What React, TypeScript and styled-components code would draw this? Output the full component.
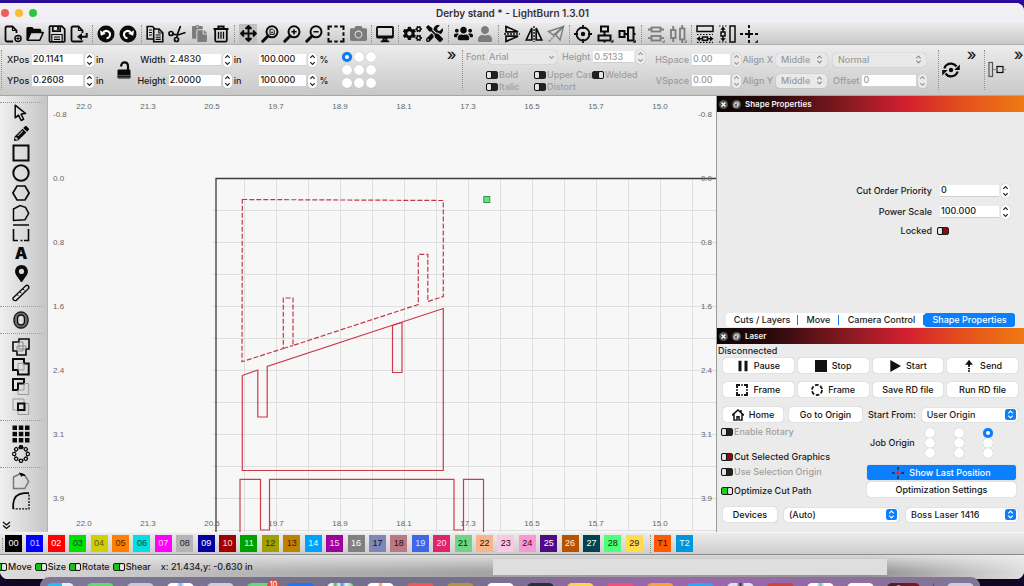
import React from "react";
import styled, { createGlobalStyle, css } from "styled-components";
import {
  FaArrowsAlt,
  FaCamera,
  FaCogs,
  FaMapMarkerAlt,
  FaPaste,
  FaPencilAlt,
  FaTools,
  FaUser,
  FaUsers,
} from "react-icons/fa";

const GlobalStyle = createGlobalStyle`
  * { box-sizing: border-box; }
  body {
    margin: 0;
    background: #12082e;
    color: #1a1a1a;
    font: 500 9px/12px Inter, "Liberation Sans", sans-serif;
    overflow: hidden;
  }
  button, input, select { font: inherit; color: inherit; margin: 0; padding: 0; border: 0; }
  svg { display: block; flex: none; }
`;

/* ---------- window shell ---------- */

const Desktop = styled.div`
  display: flex;
  flex-direction: column;
  height: 100vh;
  padding-top: 3px;
  background: linear-gradient(#2b0a9b 0 20px, #100726 40px, #100726);
`;

const Window = styled.div`
  flex: 1;
  min-height: 0;
  display: flex;
  flex-direction: column;
  border-radius: 0 8px 8px 8px;
  overflow: hidden;
  background: #ebebeb;
`;

const TitleBar = styled.header`
  flex: none;
  display: grid;
  grid-template-columns: 1fr auto 1fr;
  align-items: center;
  height: 20px;
  padding-left: 1px;
  background: #f2eff4;
`;

const Title = styled.h1`
  margin: 0;
  font-size: 10px;
  font-weight: 600;
  color: #333;
`;

const Lights = styled.div`
  display: flex;
  gap: 6px;
`;

const Light = styled.button<{ $color: string }>`
  width: 8px;
  height: 8px;
  border-radius: 50%;
  background: ${(p) => p.$color};
`;

/* ---------- toolbars ---------- */

const ToolBar = styled.div`
  flex: none;
  display: flex;
  align-items: center;
  height: 22px;
  padding-left: 2px;
  background: linear-gradient(#ebebeb, #c9c9c9);
  border-bottom: 1px solid #b0b0b0;
`;

const OptionsBar = styled(ToolBar)`
  height: 51px;
  padding-left: 0;
  background: linear-gradient(#ededed, #c8c8c8);
  border-bottom-color: #a6a6a6;
`;

const ToolButton = styled.button<{ $active?: boolean; $dim?: boolean }>`
  flex: none;
  display: grid;
  place-items: center;
  width: 22px;
  height: 20px;
  border-radius: 2px;
  background: ${(p) => (p.$active ? "#c0c0c0" : "transparent")};
  background-clip: content-box;
  color: ${(p) => (p.$dim ? "#7c7c7c" : "#0a0a0a")};
  padding: 0 2px;
`;

const Divider = styled.span<{ $wide?: boolean }>`
  flex: none;
  width: 1px;
  height: 18px;
  margin: 0 ${(p) => (p.$wide ? 3 : 2)}px;
  border-left: 1px dotted #8d8d8d;
`;

const Grip = styled.span`
  flex: none;
  width: 2px;
  height: 40px;
  border-left: 1px dotted #8d8d8d;
`;

const SideBar = styled.nav`
  flex: none;
  display: flex;
  flex-direction: column;
  width: 48px;
  padding: 6px 5px 0 0;
  background: linear-gradient(90deg, #efefef, #c6c6c6);
  border-right: 1px solid #b4b4b4;
`;

const SideButton = styled.button<{ $dim?: boolean }>`
  flex: none;
  display: grid;
  place-items: center;
  height: 20px;
  background: none;
  color: ${(p) => (p.$dim ? "#777" : "#0a0a0a")};
`;

const SideDivider = styled.span`
  flex: none;
  height: 1px;
  margin: 3px 0;
  border-top: 1px dotted #9a9a9a;
`;

const SideGrip = styled(SideDivider)`
  margin: 0;
`;

const SideMore = styled(SideButton)`
  margin-top: auto;
  width: 12px;
  height: 14px;
`;

const MoreButton = styled.button`
  flex: none;
  align-self: flex-start;
  width: 11px;
  margin-top: 3px;
  font-size: 16px;
  line-height: 12px;
  background: none;
  color: #222;
`;

/* ---------- form controls ---------- */

const Field = styled.label<{ $dim?: boolean }>`
  display: flex;
  align-items: center;
  height: 15px;
  color: ${(p) => (p.$dim ? "#9b9b9b" : "#1a1a1a")};
  white-space: nowrap;
`;

const Caption = styled.span<{ $w?: number; $gap?: number }>`
  flex: none;
  width: ${(p) => (p.$w ? `${p.$w}px` : "auto")};
  padding-right: ${(p) => p.$gap ?? 3}px;
  text-align: right;
`;

const TextBox = styled.input<{ $w: number }>`
  flex: none;
  width: ${(p) => p.$w}px;
  height: 12px;
  padding-left: 1px;
  background: #fff;
  border-bottom: 1px solid #cfcfcf;
  margin-right: 2px;
  border-radius: 0;
`;

const Stepper = styled.span<{ $dim?: boolean }>`
  flex: none;
  display: flex;
  flex-direction: column;
  width: 9px;
  height: 14px;
  border-radius: 4px;
  background: ${(p) => (p.$dim ? "#ebebeb" : "#fff")};
  box-shadow: 0 0 1px #999;
  color: ${(p) => (p.$dim ? "#9b9b9b" : "#222")};
`;

const Step = styled.button`
  display: grid;
  place-items: center;
  height: 7px;
  background: none;
`;

const Unit = styled.span`
  padding-left: 2px;
`;

const Stack = styled.div<{ $gap?: number }>`
  flex: none;
  display: flex;
  flex-direction: column;
  gap: ${(p) => p.$gap ?? 6}px;
`;

const Line = styled.div<{ $gap?: number }>`
  display: flex;
  align-items: center;
  gap: ${(p) => p.$gap ?? 0}px;
`;

const SelectWrap = styled.span<{ $w?: number; $dim?: boolean; $tight?: boolean }>`
  display: grid;
  align-items: center;
  flex: ${(p) => (p.$w ? "none" : "1")};
  width: ${(p) => (p.$w ? `${p.$w}px` : "auto")};
  height: 14px;
  border-radius: 4px;
  background: ${(p) => (p.$dim ? "#e9e9e9" : "#fff")};
  box-shadow: 0 0 1px #999;
  color: ${(p) => (p.$dim ? "#9b9b9b" : "#222")};

  select {
    grid-area: 1 / 1;
    width: 100%;
    height: 14px;
    padding-left: ${(p) => (p.$tight ? 1 : 5)}px;
    appearance: none;
    background: none;
    opacity: 1;
  }
  svg {
    grid-area: 1 / 1;
    justify-self: end;
    margin-right: 2px;
    pointer-events: none;
  }
`;

const Switch = styled.input.attrs({ type: "checkbox" })<{ $tone?: string }>`
  flex: none;
  appearance: none;
  display: flex;
  width: 12px;
  height: 8px;
  border-radius: 2px;
  background: ${(p) => p.$tone ?? "#222"};
  border: 1px solid #222;
  &::before {
    content: "";
    box-sizing: content-box;
    width: 4px;
    height: 6px;
    margin: -1px;
    border: 1px solid #111;
    border-radius: 2px;
    background: #e6e6e6;
  }
  &:checked {
    justify-content: flex-end;
  }
`;

const SwitchLabel = styled.label<{ $dim?: boolean; $w?: number }>`
  flex: none;
  display: flex;
  align-items: center;
  gap: 1px;
  height: 12px;
  width: ${(p) => (p.$w ? `${p.$w}px` : "auto")};
  white-space: nowrap;
  color: ${(p) => (p.$dim ? "#9f9f9f" : "#1a1a1a")};
`;

const AnchorGrid = styled.fieldset<{ $col: number; $row: number }>`
  flex: none;
  display: grid;
  grid-template-columns: repeat(3, ${(p) => p.$col}px);
  grid-auto-rows: ${(p) => p.$row}px;
  place-items: center;
  margin: 0;
  padding: 0;
  border: 0;
`;

const Radio = styled.input.attrs({ type: "radio" })`
  appearance: none;
  width: 10px;
  height: 10px;
  border-radius: 50%;
  background: #fff;
  box-shadow: 0 0 1px #aaa;
  &:checked {
    background: #fff;
    border: 3px solid #0a7cff;
  }
`;

/* ---------- main area ---------- */

const Main = styled.main`
  flex: 1;
  min-height: 0;
  display: flex;
`;

const CanvasArea = styled.section`
  flex: 1;
  min-width: 0;
  background: #f7f7f7;
  border-right: 1px solid #9a9a9a;
  overflow: hidden;
  > svg { width: 100%; height: 100%; }
`;

const SidePanel = styled.aside`
  flex: none;
  display: flex;
  flex-direction: column;
  width: 307px;
  background: #ebebeb;
`;

const PanelHeader = styled.header`
  flex: none;
  display: flex;
  align-items: center;
  gap: 4px;
  height: 16px;
  padding-left: 2px;
  color: #f4f4f4;
  font-size: 8px;
  font-weight: 600;
  background: linear-gradient(90deg, #0a0505, #2a0a0c 18%, #861920 42%, #d4202f 62%, #e4501d 80%, #f07a12);
`;

const HeaderButton = styled.button`
  display: grid;
  place-items: center;
  width: 9px;
  height: 9px;
  border-radius: 50%;
  background: #555;
  color: #fff;
`;

const PanelTitle = styled.h2`
  margin: 0;
  font: inherit;
`;

const PropertyList = styled.div`
  flex: 1;
  display: flex;
  flex-direction: column;
  align-items: flex-end;
  gap: 6px;
  padding: 71px 14px 0 0;
`;

const LockRow = styled.label`
  display: flex;
  align-items: center;
  gap: 5px;
  padding-right: 61px;
`;

const TabBar = styled.div`
  flex: none;
  display: flex;
  height: 14px;
  margin: 0 9px 1px;
  border-radius: 3px;
  background: #fff;
`;

const Tab = styled.button<{ $active?: boolean; $grow: number }>`
  flex: ${(p) => p.$grow} 1 0;
  white-space: nowrap;
  background: linear-gradient(#0a80ff, #0a80ff) right center / 1px 10px no-repeat;
  ${(p) =>
    p.$active &&
    css`
      background: #0a80ff;
      color: #fff;
      border-radius: 3px;
    `}
`;

const LaserBody = styled.div`
  flex: none;
  display: flex;
  flex-direction: column;
  padding: 1px 6px 10px;
`;

const StatusText = styled.p`
  margin: 0 0 1px -5px;
`;

const ButtonRow = styled.div<{ $below: number; $gap?: number }>`
  display: flex;
  align-items: center;
  gap: ${(p) => p.$gap ?? 4}px;
  margin-bottom: ${(p) => p.$below}px;
  white-space: nowrap;
`;

const PushButton = styled.button<{ $w?: number; $primary?: boolean }>`
  flex: ${(p) => (p.$w ? "none" : "1 1 0")};
  width: ${(p) => (p.$w ? `${p.$w}px` : "auto")};
  display: flex;
  align-items: center;
  justify-content: center;
  gap: 5px;
  height: 15px;
  border-radius: 3px;
  white-space: nowrap;
  background: ${(p) => (p.$primary ? "#0a80ff" : "#fff")};
  color: ${(p) => (p.$primary ? "#fff" : "#111")};
  box-shadow: 0 0 1px #8a8a8a;
`;

const LaserOptions = styled.div`
  display: grid;
  grid-template-columns: 144px 1fr;
  margin-bottom: 10px;
`;

const OptionColumn = styled.div`
  display: flex;
  flex-direction: column;
  justify-content: space-between;
  margin-left: -2px;
`;

const OptionPair = styled.div`
  display: flex;
  flex-direction: column;
  gap: 3px;
  padding-top: 6px;
`;

const OriginColumn = styled.div`
  display: flex;
  flex-direction: column;
  gap: 2px;
  padding-right: 2px;
  button { flex: none; }
`;

const JobOrigin = styled.div`
  display: flex;
  align-items: center;
  justify-content: space-between;
  padding: 2px 14px 5px 3px;
`;

/* ---------- palette and status bar ---------- */

const Palette = styled.div`
  flex: none;
  display: flex;
  align-items: center;
  height: 23px;
  padding-left: 2px;
  background: linear-gradient(#ececec, #cccccc);
  border-top: 1px solid #f4f4f4;
  border-bottom: 1px solid #8c8c8c;
`;

const Swatches = styled.div<{ $w: number }>`
  flex: none;
  display: flex;
  justify-content: space-between;
  width: ${(p) => p.$w}px;
`;

const Swatch = styled.button<{ $bg: string; $fg: string }>`
  width: 17px;
  height: 17px;
  background: ${(p) => p.$bg};
  color: ${(p) => p.$fg};
  font: 400 9px/17px "Liberation Sans", sans-serif;
  text-align: center;
`;

const PaletteGrip = styled.span`
  width: 3px;
  height: 12px;
  border-left: 1px dotted #888;
`;

const StatusBar = styled.footer`
  flex: none;
  display: grid;
  grid-template-columns: 493px 1fr 137px;
  align-items: center;
  height: 24px;
  background:
    linear-gradient(rgba(240, 240, 240, 0.75), rgba(240, 240, 240, 0) 70%),
    linear-gradient(90deg, #dcdcdc, #b4b4b4 25%, #a2a2a2 50%, #929292 85%, #dedede);
`;

const StatusItems = styled.div`
  display: flex;
  gap: 3px;
  margin-left: -5px;
`;

const Coordinates = styled.output`
  margin-left: 7px;
`;

const ProgressArea = styled.div`
  height: 16px;
  background: #dedede;
`;

const Dock = styled.div`
  flex: none;
  position: relative;
  display: flex;
  align-items: flex-start;
  gap: 13px;
  height: 9px;
  margin: -2px 44px 0 40px;
  padding: 6px 7px 0;
  overflow: hidden;
  border-radius: 9px 9px 0 0;
  background: linear-gradient(90deg, #80789a, #77708c 25%, #77708c 45%, #9a67aa 65%, #9a67aa 75%, #7f7794);
`;

const DockIcon = styled.span<{ $bg: string; $w?: number }>`
  flex: none;
  width: ${(p) => p.$w ?? 27}px;
  height: 27px;
  border-radius: 5px;
  background: ${(p) => p.$bg};
`;

const DockBadge = styled.span`
  position: absolute;
  left: 227px;
  top: 3px;
  width: 13px;
  height: 13px;
  border-radius: 50%;
  background: #e8483f;
  color: #fff;
  font-size: 7px;
  line-height: 9px;
  text-align: center;
`;

/* ---------- glyphs ---------- */

type GlyphProps = { size?: number; w?: number; children: React.ReactNode };

const Glyph = ({ size = 18, w = 1.6, children }: GlyphProps) => (
  <svg width={size} height={size} viewBox="0 0 18 18" fill="none" stroke="currentColor" strokeWidth={w} aria-hidden="true">
    {children}
  </svg>
);

const Magnifier = ({ children }: { children: React.ReactNode }) => (
  <Glyph>
    <circle cx="11" cy="6.8" r="5.5" strokeWidth="2" />
    <path d="M7 11l-5.2 5.2" strokeWidth="3" strokeLinecap="round" />
    {children}
  </Glyph>
);

const Chevron = ({ up }: { up?: boolean }) => (
  <svg width="7" height="5" viewBox="0 0 7 5" fill="none" stroke="currentColor" strokeWidth="1.2" aria-hidden="true">
    <path d={up ? "M1.3 3.8L3.5 1.6l2.2 2.2" : "M1.3 1.2l2.2 2.2 2.2-2.2"} />
  </svg>
);

const UpDown = ({ blue }: { blue?: boolean }) => (
  <svg width="11" height="11" viewBox="0 0 11 11" fill="none" strokeWidth="1.2" aria-hidden="true">
    {blue && <rect width="11" height="11" rx="2.5" fill="#0a80ff" />}
    <path d="M3.3 4.4l2.2-2.2 2.2 2.2M3.3 6.6l2.2 2.2 2.2-2.2" stroke={blue ? "#fff" : "#8d8d8d"} />
  </svg>
);

const icons = {
  newFile: (
    <Glyph w={1.8}>
      <path d="M12.5 8V5.5L8.5 1.5H3q-1.5 0-1.5 1.5v12q0 1.5 1.5 1.5h6" />
      <path d="M8.5 1.5V5.5h4" strokeWidth="1.2" />
      <circle cx="14" cy="13.5" r="3" strokeWidth="1.5" />
      <path d="M14 11.8v3.4M12.3 13.5h3.4" strokeWidth="1.1" />
    </Glyph>
  ),
  open: (
    <Glyph>
      <path d="M1.2 15V3.5q0-.7.7-.7h4l1.6 1.8h6.3q.7 0 .7.7V8" fill="currentColor" />
      <path d="M1.5 15.2L4.8 7.5h12.400l-3.400 7.7z" fill="#dcdcdc" strokeLinejoin="round" />
    </Glyph>
  ),
  save: (
    <Glyph w={1.8}>
      <path d="M1.5 2q0-.8.8-.8h11.500l2.900 2.900V16q0 .8-.8.8H2.300q-.8 0-.8-.8z" />
      <path d="M4.800 1.500v4.700h7.400V1.500M10 2v3" />
      <path d="M3.800 16.500V9.500h10.400v7M6 12h6M6 14.300h6" strokeWidth="1.2" />
    </Glyph>
  ),
  importFile: (
    <Glyph w={1.8}>
      <path d="M12.5 8V5.5L8.5 1.5H3q-1.5 0-1.5 1.5v12q0 1.5 1.5 1.5h8q1.5 0 1.5-1" />
      <path d="M8.5 1.5V5.5h4" strokeWidth="1.2" />
      <path d="M16.700 8v3.700H10" strokeWidth="2" />
      <path d="M7 11.700l5-3.700v7.400z" fill="currentColor" stroke="none" />
    </Glyph>
  ),
  undo: (
    <Glyph>
      <circle cx="9" cy="9" r="8.5" fill="currentColor" stroke="none" />
      <path d="M5.5 8.5q2.2-3.7 5.6-2.2 3.2 1.8 1.2 5.4-1 1.5-2.8 1.6" stroke="#fff" strokeWidth="2" />
      <path d="M3 5.2l.8 5.6 4.900-2z" fill="#fff" stroke="none" />
    </Glyph>
  ),
  redo: (
    <Glyph>
      <circle cx="9" cy="9" r="8.5" fill="currentColor" stroke="none" />
      <path d="M12.5 8.5Q10.3 4.8 6.9 6.3 3.7 8.1 5.7 11.7q1 1.5 2.8 1.6" stroke="#fff" strokeWidth="2" />
      <path d="M15 5.2l-.8 5.6-4.900-2z" fill="#fff" stroke="none" />
    </Glyph>
  ),
  copy: (
    <Glyph w={1.6}>
      <path d="M7 14H1.2V1.5H6.5L9 4" />
      <path d="M3 5h3M3 7.5h3M3 10h3" strokeWidth="1.1" />
      <path d="M7.7 4h5.3l3.8 3.8v9H7.7z" />
      <path d="M12.8 4.2V8h4M9.7 10h5M9.7 12.2h5M9.7 14.4h5" strokeWidth="1.1" />
    </Glyph>
  ),
  cut: (
    <Glyph w={1.7}>
      <circle cx="3" cy="8.5" r="2" />
      <circle cx="8.5" cy="14.5" r="2" />
      <path d="M4.8 9.2L10 10 17.500 7.500M8.800 12.500L9.500 9 12.500 1" />
    </Glyph>
  ),
  trash: (
    <Glyph w={1.8}>
      <path d="M1.5 4h15M6.3 3.8V1.5h5.4v2.3M3.2 4.3v11q0 1.4 1.4 1.4h8.8q1.4 0 1.4-1.4v-11" />
      <path d="M6.5 6.8v7M9 6.8v7M11.5 6.8v7" strokeWidth="1.3" />
    </Glyph>
  ),
  zoomPage: (
    <Magnifier>
      <path d="M9 4.200h2.800l1.400 1.400v3.800H9zM10 7.300h2" strokeWidth="1" />
    </Magnifier>
  ),
  zoomIn: (
    <Magnifier>
      <path d="M11 4.2v5.2M8.4 6.8h5.2" />
    </Magnifier>
  ),
  zoomOut: (
    <Magnifier>
      <path d="M8.4 6.8h5.2" />
    </Magnifier>
  ),
  frame: (
    <Glyph w={2}>
      <path d="M1.5 5V1.5H5M7.3 1.5h3.4M13 1.5h3.5V5M16.5 7.3v3.4M16.5 13v3.5H13M10.7 16.5H7.3M5 16.5H1.5V13M1.5 10.7V7.3" />
    </Glyph>
  ),
  monitor: (
    <Glyph w={1.8}>
      <rect x="1" y="2" width="16" height="10.5" rx=".8" />
      <path d="M1 11.5h16" strokeWidth="2" />
      <path d="M7.5 13.5h3v2.5h-3zM4.8 16.3h8.4" />
    </Glyph>
  ),
  flipV: (
    <Glyph w={1.7}>
      <path d="M3 1.5L15 6.800H3z" />
      <path d="M3 16.500L15 11.200H3z" />
      <path d="M1 9h16" strokeDasharray="2 1" strokeWidth="1.300" />
    </Glyph>
  ),
  flipH: (
    <Glyph w={1.7}>
      <path d="M1.2 15L6.800 3v12z" />
      <path d="M16.800 15L11.200 3v12z" />
      <path d="M9 1v16" strokeDasharray="2 1" strokeWidth="1.300" />
    </Glyph>
  ),
  mirrorLine: (
    <Glyph w={1.4}>
      <path d="M1.5 6.5L16.5 1.5 6.5 10zM16.5 1.5L13 15 8.5 9.5z" />
      <path d="M2 16.500L16 2" strokeDasharray="2 1" />
    </Glyph>
  ),
  target: (
    <Glyph w={1.8}>
      <circle cx="9" cy="9" r="6.5" />
      <circle cx="9" cy="9" r="2.2" fill="currentColor" stroke="none" />
      <path d="M9 0v4M9 14v4M0 9h4M14 9h4" />
    </Glyph>
  ),
  alignCenter: (
    <Glyph w={2}>
      <rect x="5" y="1.5" width="7" height="5" />
      <rect x="2.5" y="10.5" width="12" height="5" />
      <path d="M8.5 6v5M8.5 15v2.5" />
      <path d="M17.5 14.5v3h-3z" fill="currentColor" stroke="none" />
    </Glyph>
  ),
  alignMiddle: (
    <Glyph w={2}>
      <rect x="1.5" y="6" width="5" height="6" />
      <rect x="10" y="2.5" width="5.5" height="13" />
      <path d="M6 9h4.5M15 9h2.5" />
      <path d="M17.8 14.8v3h-3z" fill="currentColor" stroke="none" />
    </Glyph>
  ),
  distributeV: (
    <Glyph w={1.8}>
      <rect x="4.500" y="2.500" width="9" height="4" />
      <rect x="4.500" y="11" width="9" height="4.500" />
      <path d="M1 4.500h3.500M13.500 4.500H17M1 13.200h3.500M13.500 13.200H17" />
      <path d="M17.8 14.8v3h-3z" fill="currentColor" stroke="none" />
    </Glyph>
  ),
  distributeH: (
    <Glyph w={1.8}>
      <rect x="2" y="5" width="4.500" height="8" />
      <rect x="11" y="3.500" width="4.500" height="11" />
      <path d="M4.200 1v4M4.200 13v4M13.200 0v3.500M13.200 14.500V18" />
      <path d="M17.8 14.8v3h-3z" fill="currentColor" stroke="none" />
    </Glyph>
  ),
  sameWidth: (
    <Glyph w={1.5}>
      <rect x="1" y="1" width="16" height="5.500" />
      <path d="M1 9.500h16M1 17.300h16" strokeDasharray="1.500 1.500" strokeWidth="1.200" />
      <rect x="6.500" y="12" width="5" height="3.300" />
      <path d="M.5 13.700l3.500-2.700v5.400zM17.500 13.700l-3.500-2.700v5.400z" fill="currentColor" stroke="none" />
      <path d="M3 13.700h3.500M11.500 13.700H15" />
    </Glyph>
  ),
  sameHeight: (
    <Glyph w={1.5}>
      <rect x="12" y="1" width="5" height="16" />
      <path d="M1 1h8M1 17h8" strokeDasharray="1.500 1.500" strokeWidth="1.200" />
      <rect x="3" y="7" width="4" height="4" />
      <path d="M5 1.500l2.700 3.300H2.300zM5 16.500l2.700-3.300H2.300z" fill="currentColor" stroke="none" />
      <path d="M5 4v3M5 11v3" />
    </Glyph>
  ),
  crossDashed: (
    <Glyph w={1.9}>
      <path d="M9 0v3M9 5v8M9 15v3M0 9h3M5 9h8M15 9h3" />
      <path d="M17.8 14.8v3h-3z" fill="currentColor" stroke="none" />
    </Glyph>
  ),
  arrow: (
    <Glyph w={1.5}>
      <path d="M3.2 1.2v12.6l3.3-2.700 2.600 5.400 2.500-1.200-2.500-5.200 4.600-.5z" strokeLinejoin="round" />
    </Glyph>
  ),
  rect: (
    <Glyph w={2}>
      <rect x="1.5" y="1.5" width="15" height="15" />
    </Glyph>
  ),
  circle: (
    <Glyph w={2}>
      <circle cx="9" cy="9" r="7.7" />
    </Glyph>
  ),
  hexagon: (
    <Glyph w={1.7}>
      <path d="M.9 9L5 2h8l4.1 7L13 16H5z" />
    </Glyph>
  ),
  polygon: (
    <Glyph w={1.5}>
      <path d="M1.5 16.5V5L8 1.5l5.5 1.800 3.200 6-3.700 6.400z" />
    </Glyph>
  ),
  openShape: (
    <Glyph w={1.6}>
      <path d="M1 1h16M6 16.5H1.5V5M12 16.5h4.5V5M8.500 16.500h2" />
    </Glyph>
  ),
  ruler: (
    <Glyph w={1.4}>
      <path d="M1.200 13.800L14 1.500q1.300-.7 2.300.5t.3 2.400L4.300 16.300q-1.600.7-2.700-.3t-.4-2.200z" />
      <path d="M5 10.500l1.500 1.600M8 7.800l1.500 1.600M11 5l1.500 1.600" strokeWidth="1" />
    </Glyph>
  ),
  offset: (
    <Glyph>
      <rect x="3" y="1.800" width="12" height="14.500" rx="6" stroke="#666" strokeWidth="3.200" />
      <rect x="2" y="1" width="14" height="16" rx="7" strokeWidth="1" />
      <rect x="5.500" y="4" width="7" height="10" rx="3.500" strokeWidth="1.500" fill="#ddd" />
    </Glyph>
  ),
  weld: (
    <Glyph w={1.6}>
      <path d="M7 4V1h10v10h-3v6H5v-4H1V4z" />
      <path d="M7 4h4v9H5M5 13V8h9v3H7V4" stroke="#888" strokeWidth="1" />
    </Glyph>
  ),
  union: (
    <Glyph w={2}>
      <path d="M1 1h11v4.500h4.700v11H6V12H1z" />
      <path d="M6 12V5.500h6V12z" stroke="#999" strokeWidth="1" />
    </Glyph>
  ),
  subtract: (
    <Glyph w={2}>
      <path d="M1 1h11v4.500H6V12H1z" />
      <path d="M12 5.500h4.700v11H6V12M6 12h6V5.500" stroke="#999" strokeWidth="1" />
    </Glyph>
  ),
  intersect: (
    <Glyph w={2}>
      <path d="M1 1h11v11H1zM6 5.500h10.700v11H6z" stroke="#999" strokeWidth="1" />
      <path d="M6 5.500h6.500V12H6z" />
    </Glyph>
  ),
  gridArray: (
    <Glyph>
      {[0.5, 6.8, 13].map((y) =>
        [0.5, 6.8, 13].map((x) => (
          <rect key={`${x}-${y}`} x={x} y={y} width="4.5" height="4.5" fill="currentColor" stroke="none" />
        )),
      )}
    </Glyph>
  ),
  ringArray: (
    <Glyph w={1.2}>
      {[0, 45, 90, 135, 180, 225, 270, 315].map((a) => (
        <rect key={a} x="7.500" y=".7" width="3" height="3" rx=".8" transform={`rotate(${a} 9 9)`} fill={a === 0 ? "currentColor" : "none"} />
      ))}
      <circle cx="9" cy="9" r="6.800" strokeDasharray="1.800 3.540" strokeDashoffset="-1.770" strokeWidth="1" />
    </Glyph>
  ),
  startPoint: (
    <Glyph w={1.5}>
      <path d="M1.5 16.500V5L8 1.800l5 1.700 3.700 6-4 7z" stroke="#777" />
      <path d="M7 .5l5 1.500L9.500 5z" fill="#000" stroke="none" />
      <path d="M8 1.500l5 2" stroke="#000" />
    </Glyph>
  ),
  radius: (
    <Glyph w={1.8}>
      <path d="M1.200 17V12Q2 2 12 1.200h5" />
      <path d="M17 2.500v14.300H1.500" strokeDasharray="2 1.200" strokeWidth="1.300" />
    </Glyph>
  ),
  chevrons: (
    <Glyph size={9} w={2.6}>
      <path d="M2 2l7 6 7-6M2 9l7 6 7-6" />
    </Glyph>
  ),
  refresh: (
    <Glyph w={2.2}>
      <path d="M2.300 7.500Q4 2.500 9.500 2.700q3.200.2 5 2.800M15.700 10.500Q14 15.500 8.500 15.300q-3.200-.2-5-2.800" />
      <path d="M17.800 3.500v5.500h-5.500zM.2 14.500V9h5.500z" fill="currentColor" stroke="none" />
      <circle cx="9" cy="9" r="2.200" fill="currentColor" stroke="none" />
    </Glyph>
  ),
  dockLeft: (
    <Glyph w={1.2}>
      <rect x="1" y="1.500" width="3.500" height="14" stroke="#555" />
      <rect x="9" y="5.500" width="6" height="6" />
      <path d="M5 8.500h4M15 8.500h3" stroke="#888" />
    </Glyph>
  ),
  lock: (
    <svg width="14" height="18" viewBox="0 0 14 18" fill="none" aria-hidden="true">
      <path d="M4 5.500Q4.500 1.300 7.700 1.300t3.300 3.900V9" stroke="#0a0a0a" strokeWidth="2.200" />
      <rect x=".5" y="8.500" width="13" height="9" rx="1.200" fill="#0a0a0a" />
      <path d="M1 14.500h12M1 16.300h12" stroke="#777" strokeWidth=".7" />
    </svg>
  ),
};

/* ---------- small composites ---------- */

type NumberFieldProps = {
  label?: string;
  name: string;
  labelW?: number;
  labelGap?: number;
  value: string;
  w: number;
  unit?: string;
  dim?: boolean;
};

const NumberField = ({ label, name, labelW, labelGap, value, w, unit, dim }: NumberFieldProps) => (
  <Line>
    <Field $dim={dim}>
      {label && <Caption $w={labelW} $gap={labelGap}>{label}</Caption>}
      <TextBox $w={w} defaultValue={value} disabled={dim} aria-label={name} />
    </Field>
    <Stepper $dim={dim}>
      <Step aria-label={`Increase ${name}`}><Chevron up /></Step>
      <Step aria-label={`Decrease ${name}`}><Chevron /></Step>
    </Stepper>
    {unit && <Unit>{unit}</Unit>}
  </Line>
);

type DropDownProps = { name: string; value: string; w?: number; dim?: boolean; single?: boolean };

const DropDown = ({ name, value, w, dim, single }: DropDownProps) => (
  <SelectWrap $w={w} $dim={dim} $tight={single}>
    <select aria-label={name} disabled={dim} defaultValue={value}>
      <option>{value}</option>
    </select>
    {single ? <Chevron /> : <UpDown blue={!dim} />}
  </SelectWrap>
);

type ToggleProps = { label: string; on?: boolean; dim?: boolean; tone?: string; w?: number };

const Toggle = ({ label, on, dim, tone, w }: ToggleProps) => (
  <SwitchLabel $dim={dim} $w={w}>
    <Switch defaultChecked={on} disabled={dim} $tone={tone} />
    {label}
  </SwitchLabel>
);

const Anchors = ({ name, selected, col, row }: { name: string; selected: number; col: number; row: number }) => (
  <AnchorGrid $col={col} $row={row} aria-label={name}>
    {Array.from({ length: 9 }, (_, i) => (
      <Radio key={i} name={name} defaultChecked={i === selected} aria-label={`${name} ${i + 1}`} />
    ))}
  </AnchorGrid>
);

const PanelTop = ({ title }: { title: string }) => (
  <PanelHeader>
    <HeaderButton aria-label={`Close ${title}`}>
      <Glyph size={7} w={3.5}><path d="M4 4l10 10M14 4L4 14" /></Glyph>
    </HeaderButton>
    <HeaderButton aria-label={`Float ${title}`}>
      <Glyph size={7} w={2}><path d="M6 6V3h9v8h-3M3 7h9v8H3z" /></Glyph>
    </HeaderButton>
    <PanelTitle>{title}</PanelTitle>
  </PanelHeader>
);

type Tool = { name: string; icon: React.ReactNode; active?: boolean; dim?: boolean };

const toolGroups: Tool[][] = [
  [
    { name: "New", icon: icons.newFile },
    { name: "Open", icon: icons.open },
    { name: "Save", icon: icons.save },
    { name: "Import", icon: icons.importFile },
  ],
  [
    { name: "Undo", icon: icons.undo },
    { name: "Redo", icon: icons.redo },
  ],
  [
    { name: "Copy", icon: icons.copy },
    { name: "Cut", icon: icons.cut },
    { name: "Paste", icon: <FaPaste size={17} />, dim: true },
    { name: "Delete", icon: icons.trash },
  ],
  [
    { name: "Pan", icon: <FaArrowsAlt size={17} />, active: true },
    { name: "Zoom to page", icon: icons.zoomPage },
    { name: "Zoom in", icon: icons.zoomIn },
    { name: "Zoom out", icon: icons.zoomOut },
    { name: "Frame selection", icon: icons.frame },
    { name: "Camera", icon: <FaCamera size={17} />, dim: true },
  ],
  [{ name: "Preview", icon: icons.monitor }],
  [
    { name: "Settings", icon: <FaCogs size={19} /> },
    { name: "Device settings", icon: <FaTools size={17} /> },
  ],
  [
    { name: "Group", icon: <FaUsers size={19} /> },
    { name: "Ungroup", icon: <FaUser size={16} />, dim: true },
  ],
  [
    { name: "Flip vertical", icon: icons.flipV },
    { name: "Flip horizontal", icon: icons.flipH },
    { name: "Mirror across line", icon: icons.mirrorLine, dim: true },
  ],
  [
    { name: "Move to position", icon: icons.target },
    { name: "Align centers", icon: icons.alignCenter },
    { name: "Align middle", icon: icons.alignMiddle },
  ],
  [
    { name: "Distribute vertically", icon: icons.distributeV, dim: true },
    { name: "Distribute horizontally", icon: icons.distributeH, dim: true },
  ],
  [
    { name: "Same width", icon: icons.sameWidth },
    { name: "Same height", icon: icons.sameHeight },
    { name: "Move laser", icon: icons.crossDashed },
  ],
];

const wideAfter = [5, 8];

const LetterA = styled.span`
  font: 900 16px/20px Inter, sans-serif;
`;

const sideGroups: Tool[][] = [
  [
    { name: "Select", icon: icons.arrow },
    { name: "Draw lines", icon: <FaPencilAlt size={15} /> },
    { name: "Rectangle", icon: icons.rect },
    { name: "Ellipse", icon: icons.circle },
    { name: "Polygon", icon: icons.hexagon },
    { name: "Edit nodes", icon: icons.polygon },
    { name: "Tabs", icon: icons.openShape },
    { name: "Text", icon: <LetterA>A</LetterA> },
    { name: "Position laser", icon: <FaMapMarkerAlt size={17} /> },
    { name: "Measure", icon: icons.ruler },
  ],
  [{ name: "Offset", icon: icons.offset }],
  [
    { name: "Weld", icon: icons.weld },
    { name: "Union", icon: icons.union },
    { name: "Subtract", icon: icons.subtract },
    { name: "Intersect", icon: icons.intersect },
  ],
  [
    { name: "Grid array", icon: icons.gridArray },
    { name: "Circular array", icon: icons.ringArray },
  ],
  [
    { name: "Start point", icon: icons.startPoint },
    { name: "Radius", icon: icons.radius },
  ],
];

const layerColors: [string, string][] = [
  ["#000000", "#fff"], ["#0000ff", "#cfcfff"], ["#ff0000", "#fff"], ["#00e000", "#143"], ["#d0d000", "#553"],
  ["#ff8000", "#421"], ["#00e0e0", "#144"], ["#ff00ff", "#fde"], ["#b4b4b4", "#222"], ["#0000a0", "#fff"],
  ["#a00000", "#fdd"], ["#00a000", "#dfd"], ["#a0a000", "#331"], ["#c08000", "#321"], ["#00a0ff", "#dff"],
  ["#a000a0", "#fdf"], ["#808080", "#fff"], ["#7d87b9", "#112"], ["#bb7784", "#211"], ["#3d67e6", "#dfe6ff"],
  ["#e0246a", "#fde"], ["#70d484", "#121"], ["#fab488", "#211"], ["#fcc6e4", "#211"], ["#fa96d4", "#312"],
  ["#500a86", "#fff"], ["#b85200", "#fed"], ["#004450", "#fff"], ["#4eff78", "#121"], ["#ffdc4e", "#221"],
];

const xTicks = ["22.0", "21.3", "20.5", "19.7", "18.9", "18.1", "17.3", "16.5", "15.7", "15.0"];
const yTicks = ["-0.8", "0.0", "0.8", "1.6", "2.4", "3.1", "3.9"];

const dockColors: string[] = [
  "linear-gradient(90deg, #2fb8f5 55%, #e6eef5 55%)", "#62d96b", "#c9c8d3", "linear-gradient(90deg, #fff 35%, #7ab6e8 50%, #fff 65%)",
  "#cfcdd6", "#62dc72", "#1f74f2", "linear-gradient(90deg, #e8f4e8 20%, #49b55c 30%, #e9f3ea 45%, #3c8ff0 55%, #e8f4e8 70%, #65cf73)",
  "linear-gradient(90deg, #fff 40%, #f0a050 50%, #fff 60%)", "#f2574b", "#b39440", "#fdfdfd", "#26303a", "#fbd64b",
  "#f4516d", "#f6a534", "#27a9ec", "linear-gradient(90deg, #dfe3ea 35%, #333 50%, #dfe3ea 65%)", "#cf4636",
  "linear-gradient(90deg, #fff 35%, #59cfb0 50%, #fff 65%)", "#fafafa",
];

/* ---------- canvas ---------- */

const GRID = 32;

const Canvas = () => (
  <CanvasArea aria-label="Work area">
    <svg fill="none">
      <g stroke="#dfdfdf">
        {Array.from({ length: 60 }, (_, i) => (
          <line key={i} x1={196.5 + i * GRID} x2={196.5 + i * GRID} y1="82" y2="100%" />
        ))}
        {Array.from({ length: 40 }, (_, i) => (
          <line key={i} x1="164" x2="100%" y1={114.5 + i * GRID} y2={114.5 + i * GRID} />
        ))}
      </g>
      <path d="M168 2000V82.5H4000" stroke="#3c3c3c" strokeWidth="1.3" />
      <g fill="#666" fontFamily="Liberation Sans, sans-serif" fontSize="8">
        {xTicks.map((t, i) => (
          <text key={t} x={36 + i * 64} y="13" textAnchor="middle">{t}</text>
        ))}
        <svg y="100%" overflow="visible">
          {xTicks.map((t, i) => (
            <text key={t} x={36 + i * 64} y="-6" textAnchor="middle">{t}</text>
          ))}
        </svg>
        {yTicks.map((t, i) => (
          <text key={t} x="5" y={21 + i * 64}>{t}</text>
        ))}
        <svg x="100%" overflow="visible">
          {yTicks.map((t, i) => (
            <text key={t} x="-4" y={21 + i * 64} textAnchor="end">{t}</text>
          ))}
        </svg>
      </g>
      <g stroke="#cf3a48" strokeWidth="1.2">
        <path
          strokeDasharray="5 2"
          stroke="#c23748"
          d="M194.3 103.5L395.3 104.5V200.5L379.8 205.5V158.3H370.3V208.5L245 249.5V202H235.3V252.5L194 265.7zM235.3 252.5L245 249.5"
        />
        <path d="M194.3 279.5L209.8 274V321H219.2V270.5L395.3 212.5V374.5H194.3z" />
        <path d="M344.5 229.5L354 226.5V276.5H344.5z" />
        <path d="M192 440V383.3H212.5V434H221.5V383.3H406V434H415.5V383.3H435.5V440" />
      </g>
      <rect x="435.8" y="100.5" width="6" height="6" fill="#6fdc84" stroke="#2f9c4a" />
    </svg>
  </CanvasArea>
);

/* ---------- toolbar sections ---------- */

const NumericSection = styled.section`
  flex: 1;
  display: flex;
  align-items: center;
  align-self: stretch;
  padding: 0 5px 0 4px;
`;

const LockButton = styled.button`
  background: none;
  margin: 0 5px 0 13px;
`;

const Spacer = styled.span<{ $w?: number }>`
  flex: ${(p) => (p.$w ? "none" : "1")};
  width: ${(p) => (p.$w ? `${p.$w}px` : "auto")};
`;

const TextSection = styled.section`
  flex: none;
  display: flex;
  align-items: center;
  width: 474px;
`;

const FontColumn = styled.div`
  width: 191px;
  padding-top: 2px;
`;

const FontToggles = styled.div`
  display: flex;
  align-items: flex-start;
  padding: 4px 0 0 22px;
`;

const SmallSection = styled.section`
  flex: none;
  display: flex;
  align-items: center;
  align-self: stretch;
`;

const sendGlyph = (
  <Glyph size={12} w={3}>
    <path d="M9 1v9M9 12v2M9 15.5v2" />
    <path d="M9 0l6 7H3z" fill="currentColor" stroke="none" />
  </Glyph>
);

export default function App() {
  return (
    <>
      <GlobalStyle />
      <Desktop>
        <Window>
          <TitleBar>
            <Lights>
              <Light $color="#f25e57" aria-label="Close" />
              <Light $color="#f8bd32" aria-label="Minimize" />
              <Light $color="#2bc640" aria-label="Zoom" />
            </Lights>
            <Title>Derby stand * - LightBurn 1.3.01</Title>
          </TitleBar>

          <ToolBar role="toolbar">
            {toolGroups.map((group, g) => (
              <React.Fragment key={g}>
                {g > 0 && <Divider $wide={wideAfter.includes(g - 1)} />}
                {group.map((t) => (
                  <ToolButton key={t.name} aria-label={t.name} $active={t.active} $dim={t.dim}>
                    {t.icon}
                  </ToolButton>
                ))}
              </React.Fragment>
            ))}
          </ToolBar>

          <OptionsBar>
            <Spacer $w={1} />
            <Grip />
            <NumericSection>
              <Stack>
                <NumberField label="XPos" name="XPos" labelW={25} value="20.1141" w={51} unit="in" />
                <NumberField label="YPos" name="YPos" labelW={25} value="0.2608" w={51} unit="in" />
              </Stack>
              <LockButton aria-label="Lock aspect ratio">{icons.lock}</LockButton>
              <Stack>
                <NumberField label="Width" name="Width" labelW={33} value="2.4830" w={52} unit="in" />
                <NumberField label="Height" name="Height" labelW={33} value="2.0000" w={52} unit="in" />
              </Stack>
              <Spacer $w={18} />
              <Stack>
                <NumberField name="Width percent" value="100.000" w={47} unit="%" />
                <NumberField name="Height percent" value="100.000" w={47} unit="%" />
              </Stack>
              <Spacer $w={13} />
              <Anchors name="Anchor" selected={0} col={12} row={13} />
              <Spacer />
              <MoreButton aria-label="More options">»</MoreButton>
            </NumericSection>
            <Grip />
            <TextSection>
              <FontColumn>
                <Line $gap={5}>
                  <Field $dim>
                    <Caption $w={24}>Font</Caption>
                    <DropDown name="Font" value="Arial" w={69} dim single />
                  </Field>
                  <NumberField label="Height" name="Text height" value="0.5133" w={41} dim />
                </Line>
                <FontToggles>
                  <Stack $gap={0}>
                    <Toggle label="Bold" dim w={48} />
                    <Toggle label="Italic" dim w={48} />
                  </Stack>
                  <Stack $gap={0}>
                    <Toggle label="Upper Case" dim w={58} />
                    <Toggle label="Distort" dim w={58} />
                  </Stack>
                  <Toggle label="Welded" dim on />
                </FontToggles>
              </FontColumn>
              <Stack>
                <NumberField label="HSpace" name="HSpace" labelW={37} value="0.00" w={38} dim />
                <NumberField label="VSpace" name="VSpace" labelW={37} value="0.00" w={38} dim />
              </Stack>
              <Stack>
                <Field $dim>
                  <Caption $w={35}>Align X</Caption>
                  <DropDown name="Align X" value="Middle" w={51} dim />
                </Field>
                <Field $dim>
                  <Caption $w={35}>Align Y</Caption>
                  <DropDown name="Align Y" value="Middle" w={51} dim />
                </Field>
              </Stack>
              <Spacer $w={6} />
              <Stack>
                <Field $dim>
                  <DropDown name="Text style" value="Normal" w={93} dim />
                </Field>
                <NumberField label="Offset" name="Offset" value="0" w={54} dim />
              </Stack>
            </TextSection>
            <Grip />
            <SmallSection>
              <ToolButton aria-label="Refresh">{icons.refresh}</ToolButton>
              <Spacer $w={4} />
              <MoreButton aria-label="More refresh options">»</MoreButton>
            </SmallSection>
            <Spacer $w={7} />
            <Grip />
            <SmallSection>
              <ToolButton aria-label="Dock left">{icons.dockLeft}</ToolButton>
              <Spacer $w={5} />
              <MoreButton aria-label="More docking options">»</MoreButton>
            </SmallSection>
          </OptionsBar>

          <Main>
            <SideBar aria-label="Tools">
              <SideGrip />
              {sideGroups.map((group, g) => (
                <React.Fragment key={g}>
                  {g > 0 && <SideDivider />}
                  {group.map((t) => (
                    <SideButton key={t.name} aria-label={t.name}>{t.icon}</SideButton>
                  ))}
                </React.Fragment>
              ))}
              <SideMore aria-label="More tools">{icons.chevrons}</SideMore>
            </SideBar>

            <Canvas />

            <SidePanel>
              <PanelTop title="Shape Properties" />
              <PropertyList>
                <NumberField label="Cut Order Priority" name="Cut Order Priority" labelGap={8} value="0" w={59} />
                <NumberField label="Power Scale" name="Power Scale" labelGap={8} value="100.000" w={59} />
                <LockRow>
                  Locked
                  <Switch $tone="#8c0a12" />
                </LockRow>
              </PropertyList>
              <TabBar role="tablist">
                <Tab role="tab" $grow={72}>Cuts / Layers</Tab>
                <Tab role="tab" $grow={41}>Move</Tab>
                <Tab role="tab" $grow={85}>Camera Control</Tab>
                <Tab role="tab" $grow={91} $active>Shape Properties</Tab>
              </TabBar>

              <PanelTop title="Laser" />
              <LaserBody>
                <StatusText>Disconnected</StatusText>
                <ButtonRow $below={9}>
                  <PushButton><Glyph size={12}><path d="M4.5 1v16M13.5 1v16" strokeWidth="4.5" /></Glyph>Pause</PushButton>
                  <PushButton><Glyph size={12}><rect width="18" height="18" fill="currentColor" stroke="none" /></Glyph>Stop</PushButton>
                  <PushButton><Glyph size={12}><path d="M2 0l16 9-16 9z" fill="currentColor" stroke="none" /></Glyph>Start</PushButton>
                  <PushButton>{sendGlyph}Send</PushButton>
                </ButtonRow>
                <ButtonRow $below={10}>
                  <PushButton><Glyph size={12} w={2.8}><path d="M1.5 6V1.5H6M8 1.5h2M12 1.5h4.5V6M16.5 8v2M16.5 12v4.5H12M10 16.5H8M6 16.5H1.5V12M1.5 10V8" /></Glyph>Frame</PushButton>
                  <PushButton><Glyph size={12} w={2.6}><circle cx="9" cy="9" r="7.6" strokeDasharray="5.5 2.46" /></Glyph>Frame</PushButton>
                  <PushButton>Save RD file</PushButton>
                  <PushButton>Run RD file</PushButton>
                </ButtonRow>
                <ButtonRow $below={4} $gap={6}>
                  <PushButton $w={60}>
                    <Glyph size={12} w={2.2}><path d="M0 9.5L9 1.5l9 8M3 8v8.700h4.500v-5h3v5H15V8M13.500 5V1.500" /></Glyph>Home
                  </PushButton>
                  <PushButton $w={73}>Go to Origin</PushButton>
                  <span>Start From:</span>
                  <DropDown name="Start From" value="User Origin" />
                </ButtonRow>
                <LaserOptions>
                  <OptionColumn>
                    <Toggle label="Enable Rotary" dim />
                    <OptionPair>
                      <Toggle label="Cut Selected Graphics" tone="#8c0a12" />
                      <Toggle label="Use Selection Origin" dim />
                    </OptionPair>
                    <Toggle label="Optimize Cut Path" tone="#14d414" on />
                  </OptionColumn>
                  <OriginColumn>
                    <JobOrigin>
                      Job Origin
                      <Anchors name="Job Origin" selected={2} col={29} row={10} />
                    </JobOrigin>
                    <PushButton $primary>
                      <Glyph size={12} w={2}>
                        <path d="M9 0v4M9 14v4M0 9h4M14 9h4" stroke="#123" />
                        <path d="M9 5v8M5 9h8" stroke="#c33" />
                      </Glyph>
                      Show Last Position
                    </PushButton>
                    <PushButton>Optimization Settings</PushButton>
                  </OriginColumn>
                </LaserOptions>
                <ButtonRow $below={0} $gap={7}>
                  <PushButton $w={54}>Devices</PushButton>
                  <DropDown name="Port" value="(Auto)" />
                  <DropDown name="Device" value="Boss Laser 1416" w={112} />
                </ButtonRow>
              </LaserBody>
            </SidePanel>
          </Main>

          <Palette>
            <PaletteGrip />
            <Swatches $w={638}>
              {layerColors.map(([bg, fg], i) => (
                <Swatch key={i} $bg={bg} $fg={fg}>{String(i).padStart(2, "0")}</Swatch>
              ))}
            </Swatches>
            <Spacer $w={4} />
            <Divider $wide />
            <Swatches $w={39}>
              <Swatch $bg="#ff5a00" $fg="#311">T1</Swatch>
              <Swatch $bg="#0096dc" $fg="#dff">T2</Swatch>
            </Swatches>
          </Palette>

          <StatusBar>
            <StatusItems>
              <Toggle label="Move" tone="#14c414" on />
              <Toggle label="Size" tone="#14c414" on />
              <Toggle label="Rotate" tone="#14c414" on />
              <Toggle label="Shear" tone="#14c414" on />
              <Coordinates>x: 21.434,y: -0.630 in</Coordinates>
            </StatusItems>
            <ProgressArea />
          </StatusBar>
        </Window>
        <Dock>
          {dockColors.map((c, i) => (
            <DockIcon key={i} $bg={c} />
          ))}
          <DockIcon $w={33} $bg="radial-gradient(circle at 35% 40%, #fff 30%, transparent 32%), linear-gradient(90deg, #3a2424, #8c1420)" />
          <DockIcon $w={1} $bg="#555068" />
          <DockIcon $bg="#cfcbdc" />
          <DockBadge>10</DockBadge>
        </Dock>
      </Desktop>
    </>
  );
}
